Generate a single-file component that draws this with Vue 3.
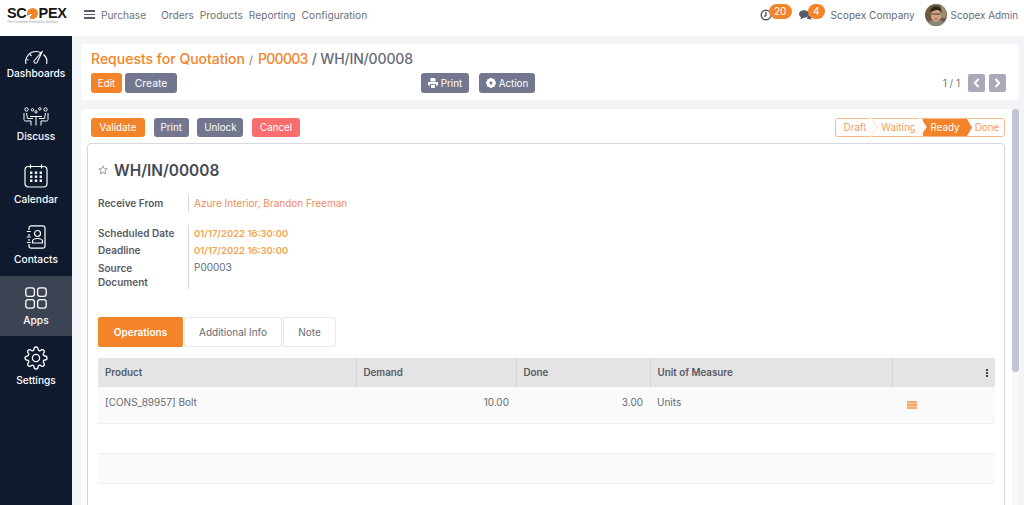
<script setup>
const topMenu = ['Orders', 'Products', 'Reporting', 'Configuration']

const stages = [
  { name: 'Draft', cls: 'draft' },
  { name: 'Waiting', cls: 'waiting' },
  { name: 'Ready', cls: 'ready' },
  { name: 'Done', cls: 'done' }
]

const rows = [
  { product: '[CONS_89957] Bolt', demand: '10.00', done: '3.00', uom: 'Units' },
  { product: '', demand: '', done: '', uom: '' },
  { product: '', demand: '', done: '', uom: '' }
]
</script>

<template>
  <div class="page">
    <header class="topbar">
      <div class="logo">
        <div class="logo-word">SC<span class="logo-o"></span>PEX</div>
        <div class="logo-sub">The Complete Enterprise Solution</div>
      </div>
      <span class="burger"><i></i><i></i><i></i></span>
      <span class="app-name">Purchase</span>
      <nav class="top-menu">
        <a v-for="m in topMenu" :key="m">{{ m }}</a>
      </nav>
      <div class="top-right">
        <div class="systray clock">
          <svg width="12" height="12" viewBox="0 0 12 12" fill="none" stroke="#555b66" stroke-width="1.4">
            <circle cx="6" cy="6" r="4.8" />
            <path d="M6 3v3.3L4.2 7.6" />
          </svg>
          <span class="count count-wide">20</span>
        </div>
        <div class="systray chat">
          <svg width="13" height="12" viewBox="0 0 13 12" fill="#555b66">
            <ellipse cx="5" cy="5" rx="5" ry="3.8" />
            <path d="M2 7.5 1.5 10.5 5 8.5z" />
            <path d="M9 6.5h3v3l.5 1.5-2-1H8z" />
          </svg>
          <span class="count">4</span>
        </div>
        <span class="company">Scopex Company</span>
        <svg class="avatar" width="22" height="22" viewBox="0 0 22 22">
          <defs>
            <clipPath id="avatar-clip"><circle cx="11" cy="11" r="11" /></clipPath>
          </defs>
          <g clip-path="url(#avatar-clip)">
            <rect width="22" height="22" fill="#6b5a45" />
            <rect x="16" width="6" height="14" fill="#9a8a72" />
            <path d="M1 22c1-5 5-6 10-6s9 1 10 6z" fill="#8b8575" />
            <ellipse cx="11" cy="11" rx="5.200" ry="6.800" fill="#d2a283" />
            <path d="M5.500 9C5 4 8 2.400 11 2.400S17 4 16.500 9C15 6.300 13 5.800 11 6.200 9 6.600 7 6.600 5.500 9z" fill="#33241a" />
            <path d="M6.500 10h3.500M12 10h3.500M10 10h2" stroke="#3b2c22" stroke-width=".9" />
            <path d="M9 14.500c1.300.8 2.700.8 4 0" stroke="#8d5d48" stroke-width=".8" fill="none" />
          </g>
        </svg>
        <span class="user">Scopex Admin</span>
      </div>
    </header>

    <div class="body">
      <aside class="sidebar">
        <a class="nav-item nav-dashboards">
          <svg width="24" height="15" viewBox="0 0 24 15" fill="none" stroke="#fff" stroke-width="1.100">
            <path d="M2 14C.5 8 5 1.500 12 1.500c2 0 3.500.5 5 1.500" />
            <path d="M19.500 4.500c3 2.500 4 6 3 9.500" />
            <path d="M10 11 18.500 1 13 12.500a1.700 1.700 0 0 1-3-1.500z" />
            <path d="M2.500 9.500 4.500 10M6 4.500 7.500 6" />
          </svg>
          <span>Dashboards</span>
        </a>
        <a class="nav-item nav-discuss">
          <svg width="26" height="19" viewBox="0 0 26 19" fill="none" stroke="#fff" stroke-width="1">
            <circle cx="3.500" cy="2.500" r="1.700" />
            <circle cx="22.500" cy="2.500" r="1.700" />
            <circle cx="9.500" cy="2.800" r="1.200" />
            <circle cx="13" cy="4.800" r="1.200" />
            <circle cx="16.800" cy="1.800" r="1.200" />
            <path d="M1 6v6.500c0 1 .7 1.500 1.500 1.500H8v4.500M3.500 6l1 5.500h5.500" />
            <path d="M25 6v6.500c0 1-.7 1.500-1.500 1.500H18v4.500M22.500 6l-1 5.500H16" />
            <path d="M7 9.500h12M13 9.500v9" />
          </svg>
          <span>Discuss</span>
        </a>
        <a class="nav-item nav-calendar">
          <svg width="24" height="24" viewBox="0 0 24 24" fill="none" stroke="#fff" stroke-width="1.200">
            <rect x="1" y="2.500" width="22" height="20.500" rx="3.500" />
            <path d="M6.500.5v4M17.500.5v4" />
            <g fill="#fff" stroke="none">
              <rect x="6" y="7.500" width="2.400" height="2.400" /><rect x="10.800" y="7.500" width="2.400" height="2.400" /><rect x="15.600" y="7.500" width="2.400" height="2.400" />
              <rect x="6" y="11.500" width="2.400" height="2.400" /><rect x="10.800" y="11.500" width="2.400" height="2.400" /><rect x="15.600" y="11.500" width="2.400" height="2.400" />
              <rect x="6" y="15.500" width="2.400" height="2.400" /><rect x="10.800" y="15.500" width="2.400" height="2.400" /><rect x="15.600" y="15.500" width="2.400" height="2.400" />
            </g>
          </svg>
          <span>Calendar</span>
        </a>
        <a class="nav-item nav-contacts">
          <svg width="20" height="24" viewBox="0 0 20 24" fill="none" stroke="#fff" stroke-width="1.200">
            <path d="M3 5V3a2.200 2.200 0 0 1 2.200-2.200h11.800A2.200 2.200 0 0 1 19 3v18a2.200 2.200 0 0 1-2.200 2.200H5.200A2.200 2.200 0 0 1 3 21v-2M3 9v2M3 14v2" />
            <path d="M.8 6.500h4M.8 12h4M.8 17.500h4" />
            <circle cx="11.500" cy="8.500" r="3" />
            <path d="M6.500 18v-1.500c0-2 2-3 5-3s5 1 5 3V18z" />
          </svg>
          <span>Contacts</span>
        </a>
        <a class="nav-item nav-apps active">
          <svg width="22" height="22" viewBox="0 0 22 22" fill="none" stroke="#fff" stroke-width="1.300">
            <rect x=".8" y=".8" width="8.600" height="8.600" rx="2.400" />
            <rect x="12.600" y=".8" width="8.600" height="8.600" rx="2.400" />
            <rect x=".8" y="12.600" width="8.600" height="8.600" rx="2.400" />
            <rect x="12.600" y="12.600" width="8.600" height="8.600" rx="2.400" />
          </svg>
          <span>Apps</span>
        </a>
        <a class="nav-item nav-settings">
          <svg width="24" height="24" viewBox="0 0 24 24" fill="none" stroke="#fff" stroke-width="1.300">
            <circle cx="12" cy="12" r="3.600" />
            <path d="M19.400 15a1.650 1.650 0 0 0 .33 1.820l.06.06a2 2 0 0 1 0 2.830 2 2 0 0 1-2.830 0l-.06-.06a1.650 1.650 0 0 0-1.820-.33 1.650 1.650 0 0 0-1 1.510V21a2 2 0 0 1-2 2 2 2 0 0 1-2-2v-.09A1.650 1.650 0 0 0 9 19.400a1.650 1.650 0 0 0-1.820.33l-.06.06a2 2 0 0 1-2.830 0 2 2 0 0 1 0-2.830l.06-.06a1.650 1.650 0 0 0 .33-1.820 1.650 1.650 0 0 0-1.510-1H3a2 2 0 0 1-2-2 2 2 0 0 1 2-2h.09A1.650 1.650 0 0 0 4.600 9a1.650 1.650 0 0 0-.33-1.820l-.06-.06a2 2 0 0 1 0-2.830 2 2 0 0 1 2.830 0l.06.06a1.650 1.650 0 0 0 1.820.33H9a1.650 1.650 0 0 0 1-1.510V3a2 2 0 0 1 2-2 2 2 0 0 1 2 2v.09a1.650 1.650 0 0 0 1 1.510 1.650 1.650 0 0 0 1.820-.33l.06-.06a2 2 0 0 1 2.830 0 2 2 0 0 1 0 2.830l-.06.06a1.650 1.650 0 0 0-.33 1.820V9a1.650 1.650 0 0 0 1.510 1H21a2 2 0 0 1 2 2 2 2 0 0 1-2 2h-.09a1.650 1.650 0 0 0-1.510 1z" />
          </svg>
          <span>Settings</span>
        </a>
      </aside>

      <main class="main">
        <section class="control-panel">
          <h1 class="breadcrumb">
            <a>Requests for Quotation</a>
            <span class="sep">/</span>
            <a class="po">P00003</a>
            <span class="current">/ WH/IN/00008</span>
          </h1>
          <div class="cp-row">
            <div class="cp-left">
              <button class="btn orange w-edit">Edit</button>
              <button class="btn slate w-create">Create</button>
            </div>
            <div class="cp-center">
              <button class="btn slate w-print-top">
                <svg width="10" height="10" viewBox="0 0 10 10" fill="#fff">
                  <path d="M2.500 0h4L7.500 1v2.500h-5zM0 4h10v3.500H8V6H2v1.500H0zM3 6.800h4V10H3z" />
                </svg>
                Print
              </button>
              <button class="btn slate w-action">
                <svg width="10" height="10" viewBox="0 0 10 10">
                  <circle cx="5" cy="5" r="3.500" fill="none" stroke="#fff" stroke-width="2.400" />
                  <path d="M5 0v10M0 5h10M1.500 1.500l7 7M8.500 1.500l-7 7" stroke="#fff" stroke-width="1.300" />
                  <circle cx="5" cy="5" r="1.400" fill="#72778f" />
                </svg>
                Action
              </button>
            </div>
            <div class="cp-right">
              <span class="pager">1 / 1</span>
              <button class="page-btn">
                <svg width="7" height="10" viewBox="0 0 7 10" fill="none" stroke="#fff" stroke-width="2"><path d="M5.500 1 1.800 5l3.700 4" /></svg>
              </button>
              <button class="page-btn">
                <svg width="7" height="10" viewBox="0 0 7 10" fill="none" stroke="#fff" stroke-width="2"><path d="M1.500 1l3.700 4-3.700 4" /></svg>
              </button>
            </div>
          </div>
        </section>

        <div class="form-wrap">
          <section class="form-card">
            <div class="form-bar">
              <div class="form-actions">
                <button class="btn orange w-validate">Validate</button>
                <button class="btn slate w-print">Print</button>
                <button class="btn slate w-unlock">Unlock</button>
                <button class="btn red w-cancel">Cancel</button>
              </div>
              <div class="status-bar">
                <span v-for="s in stages" :key="s.name" class="stage" :class="s.cls">{{ s.name }}</span>
              </div>
            </div>

            <div class="sheet">
              <div class="title-row">
                <svg width="10" height="10" viewBox="0 0 24 24" fill="none" stroke="#888" stroke-width="2">
                  <path d="m12 2 3 6.600 7.200.8-5.400 4.800 1.500 7.100L12 17.700l-6.300 3.600 1.500-7.100L1.800 9.400 9 8.600z" />
                </svg>
                <h2>WH/IN/00008</h2>
              </div>

              <div class="field-group first">
                <div class="field-labels"><label>Receive From</label></div>
                <div class="field-values"><a class="partner">Azure Interior, Brandon Freeman</a></div>
              </div>

              <div class="field-group">
                <div class="field-labels">
                  <label>Scheduled Date</label>
                  <label>Deadline</label>
                  <label class="wrap">Source Document</label>
                </div>
                <div class="field-values">
                  <span class="date">01/17/2022 16:30:00</span>
                  <span class="date">01/17/2022 16:30:00</span>
                  <span class="plain">P00003</span>
                </div>
              </div>

              <div class="tabs">
                <a class="tab active">Operations</a>
                <a class="tab">Additional Info</a>
                <a class="tab">Note</a>
              </div>

              <table class="lines">
                <thead>
                  <tr>
                    <th class="col-product">Product</th>
                    <th class="col-demand">Demand</th>
                    <th class="col-done">Done</th>
                    <th class="col-uom">Unit of Measure</th>
                    <th class="col-opt"><span class="dots"><i></i><i></i><i></i></span></th>
                  </tr>
                </thead>
                <tbody>
                  <tr v-for="(r, i) in rows" :key="i">
                    <td>{{ r.product }}</td>
                    <td class="num">{{ r.demand }}</td>
                    <td class="num">{{ r.done }}</td>
                    <td>{{ r.uom }}</td>
                    <td class="opt-cell">
                      <svg v-if="i === 0" width="10" height="8" viewBox="0 0 10 8" fill="#f38429">
                        <rect width="10" height="2.400" opacity=".7" />
                        <rect y="2.800" width="10" height="2.400" opacity=".7" />
                        <rect y="5.600" width="10" height="2.400" opacity=".7" />
                      </svg>
                    </td>
                  </tr>
                </tbody>
              </table>
            </div>
          </section>
          <div class="scrollbar"><div class="thumb"></div></div>
        </div>
      </main>
    </div>
  </div>
</template>

<style scoped>
.page {
  width: 1024px;
  height: 505px;
  overflow: hidden;
  display: flex;
  flex-direction: column;
  background: #f3f4f8;
  font-family: Inter, "Open Sans", "Liberation Sans", sans-serif;
  font-size: 10px;
  color: #666b75;
}

/* top bar */
.topbar {
  height: 36px;
  flex: none;
  box-sizing: border-box;
  background: #fff;
  display: flex;
  align-items: center;
  padding: 0 0 7px 7px;
}

.logo {
  width: 77px;
  flex: none;
  margin-top: 2px;
}

.logo-word {
  font-family: "Liberation Sans", Arial, sans-serif;
  font-weight: 700;
  font-size: 14.5px;
  line-height: 13px;
  color: #151515;
  display: flex;
  align-items: center;
  letter-spacing: -0.3px;
}

.logo-o {
  width: 11px;
  height: 11px;
  margin: 0 0.5px;
  border-radius: 50%;
  background: conic-gradient(#f38429 0 60%, #fff 60% 68%, #f38429 68%);
}

.logo-sub {
  font-size: 3.2px;
  line-height: 4px;
  color: #999;
  white-space: nowrap;
}

.burger {
  width: 11px;
  display: flex;
  flex-direction: column;
  gap: 2px;
  margin-right: 6px;
}

.burger i {
  height: 1.5px;
  background: #555b66;
}

.app-name {
  width: 60px;
  flex: none;
}

.app-name,
.top-menu a {
  font-size: 10.2px;
  color: #6c717b;
}

.top-menu {
  display: flex;
  gap: 6px;
}

.top-right {
  margin-left: auto;
  display: flex;
  align-items: center;
  padding-right: 6px;
}

.systray {
  display: flex;
  align-items: center;
}

.systray.chat {
  margin-left: 7px;
}

.count {
  min-width: 17px;
  height: 15px;
  line-height: 15px;
  margin-top: -7px;
  margin-left: -4px;
  text-align: center;
  border-radius: 8px;
  background: #f38429;
  color: #fff;
  font-size: 10px;
}

.count-wide {
  min-width: 23px;
  margin-left: -3px;
}

.company {
  margin-left: 6px;
  font-size: 10.1px;
  width: 94px;
}

.avatar {
  flex: none;
}

.user {
  margin-left: 4px;
  font-size: 9.9px;
}

/* sidebar */
.body {
  flex: 1;
  display: flex;
  min-height: 0;
}

.sidebar {
  width: 72px;
  flex: none;
  background: #0f1a2e;
}

.nav-item {
  height: 60px;
  box-sizing: border-box;
  display: flex;
  flex-direction: column;
  align-items: center;
  color: #fff;
  font-size: 10.2px;
  font-weight: 500;
  line-height: 14px;
  gap: 4px;
}

.nav-item svg {
  flex: none;
}

.nav-item.active {
  background: #3c4453;
}

.nav-dashboards { padding-top: 14px; gap: 1px; }
.nav-discuss { padding-top: 11px; gap: 3px; }
.nav-calendar { padding-top: 8px; gap: 4px; }
.nav-contacts { padding-top: 9px; gap: 3px; }
.nav-apps { padding-top: 11px; }
.nav-settings { padding-top: 10px; gap: 3px; }

/* control panel */
.main {
  flex: 1;
  min-width: 0;
  display: flex;
  flex-direction: column;
  gap: 9px;
  padding: 8px 5px 0 9px;
}

.control-panel {
  flex: none;
  height: 56px;
  box-sizing: border-box;
  background: #fff;
  border-radius: 4px;
  padding: 5px 13px 0 10px;
}

.breadcrumb {
  margin: 0 0 1px;
  height: 23px;
  line-height: 19px;
  font-size: 14px;
  font-weight: 500;
  color: #f38429;
  white-space: nowrap;
}

.breadcrumb .sep {
  font-size: 11px;
  color: #777;
  margin: 0 5px 0 4px;
  font-weight: 400;
}

.breadcrumb .po {
  letter-spacing: -0.7px;
}

.breadcrumb .current {
  color: #666b75;
  margin-left: 4px;
  letter-spacing: -0.15px;
}

.cp-row {
  display: grid;
  grid-template-columns: 330px auto 1fr;
  align-items: center;
}

.cp-left {
  display: flex;
  gap: 3px;
}

.cp-center {
  display: flex;
  gap: 10px;
}

.cp-right {
  display: flex;
  justify-content: flex-end;
  align-items: center;
}

.pager {
  margin-right: 4px;
  color: #777;
}

.page-btn {
  width: 17px;
  height: 18px;
  border: none;
  padding: 0;
  margin-left: 4px;
  border-radius: 2px;
  background: #a8abb7;
  display: flex;
  align-items: center;
  justify-content: center;
}

.btn {
  height: 20px;
  padding: 0;
  border: none;
  border-radius: 3px;
  color: #fff;
  font-family: inherit;
  font-size: 9.8px;
  display: inline-flex;
  align-items: center;
  justify-content: center;
  gap: 3px;
}

.btn.orange { background: #f38429; }
.btn.slate { background: #72778f; }
.btn.red { background: #f96d6f; }

.w-edit { width: 31px; }
.w-create { width: 52px; font-size: 10.4px; }
.w-print-top { width: 48px; }
.w-action { width: 56px; }
.w-validate { width: 54px; }
.w-print { width: 35px; }
.w-unlock { width: 46px; }
.w-cancel { width: 48px; }

/* form */
.form-wrap {
  flex: 1;
  min-height: 0;
  display: flex;
}

.form-card {
  flex: 1;
  min-width: 0;
  background: #fff;
  border-radius: 4px 0 0 0;
  padding: 9px 7px 0 6px;
}

.form-bar {
  display: flex;
  justify-content: space-between;
  align-items: center;
  height: 19px;
  padding-left: 4px;
  margin-bottom: 6px;
}

.form-actions {
  display: flex;
  gap: 8.7px;
}

.form-actions .btn {
  height: 19px;
}

.status-bar {
  display: flex;
  height: 19px;
  box-sizing: border-box;
  border: 1px solid #f6b98a;
  border-radius: 3px;
  width: 170px;
}

.stage {
  position: relative;
  display: flex;
  align-items: center;
  justify-content: center;
  color: #f59a5e;
  font-size: 9.8px;
}

.stage.draft { width: 38px; }
.stage.waiting { width: 49px; z-index: 1; }
.stage.ready { width: 44px; background: #f38429; color: #fff; }
.stage.done { flex: 1; padding-left: 3px; }

.stage.draft::after,
.stage.waiting::after {
  content: "";
  position: absolute;
  right: -3px;
  top: 2px;
  width: 11px;
  height: 11px;
  transform: rotate(45deg) skew(12deg, 12deg);
  border-top: 1px solid #fde3d0;
  border-right: 1px solid #fde3d0;
  background: #fff;
  z-index: 1;
}

.stage.ready::after {
  content: "";
  position: absolute;
  right: -5px;
  top: 0;
  width: 5px;
  height: 100%;
  background: #f38429;
  clip-path: polygon(0 0, 100% 50%, 0 100%);
  z-index: 2;
}

.sheet {
  height: 400px;
  box-sizing: border-box;
  border: 1px solid #d8d9e0;
  border-radius: 4px;
  padding: 14px 10px 0;
}

.title-row {
  display: flex;
  align-items: center;
  gap: 6px;
  height: 24px;
  margin-bottom: 13px;
}

.title-row h2 {
  margin: 0;
  font-size: 15.4px;
  font-weight: 600;
  color: #444a54;
}

.field-group {
  display: flex;
  margin-bottom: 12px;
}

.field-group.first {
  margin-bottom: 13px;
}

.field-labels {
  width: 91px;
  flex: none;
  border-right: 1px solid #d8d8d8;
  box-sizing: border-box;
  display: flex;
  flex-direction: column;
}

.field-labels label {
  font-weight: 600;
  font-size: 10px;
  line-height: 17px;
  color: #555a64;
}

.field-labels label.wrap {
  width: 60px;
  line-height: 14px;
  padding-top: 2px;
}

.field-values {
  padding-left: 5px;
  display: flex;
  flex-direction: column;
  font-size: 10px;
}

.field-values > * {
  line-height: 17px;
}

.partner {
  color: #f08a5b;
}

.date {
  color: #f4a44f;
  font-size: 9.5px;
  font-weight: 600;
}

.tabs {
  display: flex;
  margin-top: 28px;
  margin-bottom: 11px;
  height: 30px;
}

.tab {
  box-sizing: border-box;
  display: flex;
  align-items: center;
  justify-content: center;
  border: 1px solid #e8e8e8;
  border-radius: 2px;
  font-size: 10px;
  width: 98px;
  margin-left: 1px;
}

.tab.active {
  width: 85px;
  margin-left: 0;
  background: #f38429;
  border-color: #f38429;
  color: #fff;
  font-weight: 600;
}

.tab:last-child {
  width: 53px;
}

.lines {
  width: 897px;
  border-collapse: collapse;
  table-layout: fixed;
}

.lines th {
  box-sizing: border-box;
  height: 29px;
  padding: 0 7px;
  background: #e4e4e4;
  border-right: 1px solid #d4d4d4;
  text-align: left;
  font-weight: 600;
  font-size: 9.8px;
  color: #555a64;
}

.lines th:last-child {
  border-right: none;
}

.col-product { width: 258px; }
.col-demand { width: 160px; }
.col-done { width: 134px; }
.col-uom { width: 242px; }

.lines td {
  box-sizing: border-box;
  height: 30px;
  padding: 0 7px;
  border-bottom: 1px solid #f0f0f0;
  font-size: 10px;
}

.lines tbody tr:first-child td {
  height: 36px;
  padding-bottom: 6px;
}

.lines tbody tr:nth-child(odd) {
  background: #fafafa;
}

.lines td.num {
  text-align: right;
}

.opt-cell svg {
  display: block;
  margin: 6px 0 0 8px;
}

.dots {
  float: right;
  display: flex;
  flex-direction: column;
  gap: 1px;
}

.dots i {
  width: 2px;
  height: 2px;
  background: #444;
}

.scrollbar {
  width: 7px;
  flex: none;
  background: #f8f8fb;
}

.thumb {
  height: 263px;
  background: #c2c5d2;
  border-radius: 3px;
}
</style>

<style>
html,
body {
  margin: 0;
  padding: 0;
}
</style>
